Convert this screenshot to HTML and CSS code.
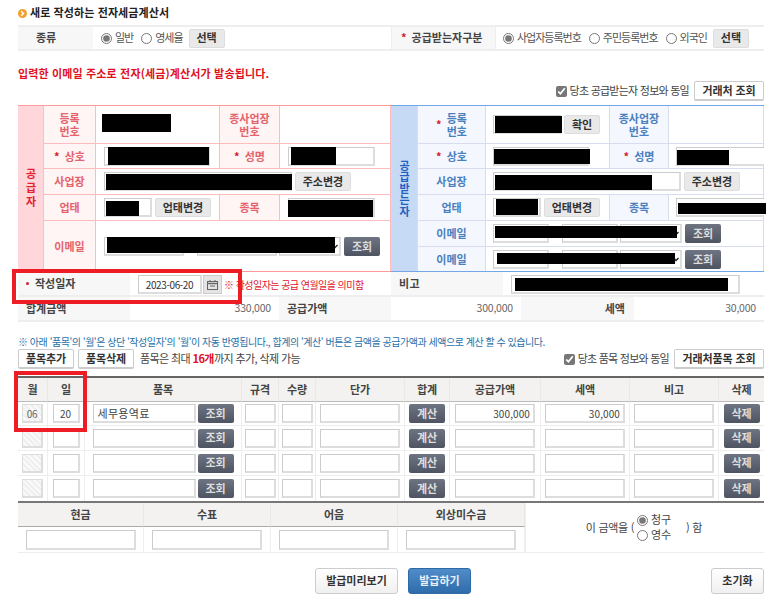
FILE: index.html
```html
<!DOCTYPE html>
<html lang="ko">
<head>
<meta charset="utf-8">
<title>전자세금계산서</title>
<link rel="stylesheet" href="styles.css">
</head>
<body>
<main class="page">
  <h1 class="title">
    <svg class="title-icon" width="9" height="9" viewBox="0 0 9 9"><circle cx="4.5" cy="4.5" r="4.5" fill="#f0a030"/><path d="M3.2 2.3 5.5 4.5 3.2 6.7" fill="none" stroke="#fff" stroke-width="1.4"/></svg>
    새로 작성하는 전자세금계산서
  </h1>

  <section class="kind-bar">
    <div class="kind-label k1">종류</div>
    <div class="kind-val kv1">
      <label class="opt"><input type="radio" name="a" checked>일반</label>
      <label class="opt"><input type="radio" name="a">영세율</label>
      <button class="btn b-near">선택</button>
    </div>
    <div class="kind-label k2"><span class="star">*</span>공급받는자구분</div>
    <div class="kind-val kv2">
      <label class="opt"><input type="radio" name="b" checked>사업자등록번호</label>
      <label class="opt"><input type="radio" name="b">주민등록번호</label>
      <label class="opt"><input type="radio" name="b">외국인</label>
      <button class="btn b-near">선택</button>
    </div>
  </section>

  <p class="notice">입력한 이메일 주소로 전자(세금)계산서가 발송됩니다.</p>

  <div class="same-row">
    <label class="check"><input type="checkbox" checked>당초 공급받는자 정보와 동일</label>
    <button class="btn-w b-lookup">거래처 조회</button>
  </div>

  <section class="panels">
    <div class="panel sup">
      <div class="side">공급자</div>
      <div class="lb">등록<br>번호</div>
      <div class="val"></div>
      <div class="lb">종사업장<br>번호</div>
      <div class="val"></div>

      <div class="lb"><span class="star">*</span>상호</div>
      <div class="val"><input class="in w106"></div>
      <div class="lb"><span class="star">*</span>성명</div>
      <div class="val"><input class="in w87"></div>

      <div class="lb">사업장</div>
      <div class="val span3"><input class="in w188"><button class="btn b-addr">주소변경</button></div>

      <div class="lb">업태</div>
      <div class="val"><input class="in w48"><button class="btn b-addr">업태변경</button></div>
      <div class="lb">종목</div>
      <div class="val"><input class="in w87"></div>

      <div class="lb">이메일</div>
      <div class="val span3 email-l">
        <input class="in w80"><input class="in w80 gap13"><select class="in sel"></select><button class="btn-d">조회</button>
      </div>
    </div>

    <div class="panel rec">
      <div class="side">공급받는자</div>
      <div class="lb"><span class="star">*</span><span>등록<br>번호</span></div>
      <div class="val"><input class="in w68"><button class="btn">확인</button></div>
      <div class="lb">종사업장<br>번호</div>
      <div class="val"></div>

      <div class="lb"><span class="star">*</span>상호</div>
      <div class="val"><input class="in w96"></div>
      <div class="lb"><span class="star">*</span>성명</div>
      <div class="val"><input class="in w100"></div>

      <div class="lb">사업장</div>
      <div class="val span3"><input class="in w188"><button class="btn b-addr">주소변경</button></div>

      <div class="lb">업태</div>
      <div class="val"><input class="in w48"><button class="btn b-addr">업태변경</button></div>
      <div class="lb">종목</div>
      <div class="val"><input class="in w100"></div>

      <div class="lb">이메일</div>
      <div class="val span3 email-r">
        <input class="in w56"><input class="in w56 gap13"><select class="in sel"></select><button class="btn-d">조회</button>
      </div>

      <div class="lb">이메일</div>
      <div class="val span3 email-r">
        <input class="in w56"><input class="in w56 gap13"><select class="in sel"></select><button class="btn-d">조회</button>
      </div>
    </div>
  </section>

  <section class="date-row">
    <div class="sum-lb date-lb"><i class="dot"></i>작성일자</div>
    <div class="date-val">
      <input class="in date-in" value="2023-06-20">
      <button class="cal" aria-label="달력">
        <svg width="11" height="10" viewBox="0 0 11 10"><rect x=".5" y="1.5" width="10" height="8" fill="none" stroke="#666"/><path d="M.5 3.5h10" stroke="#666" stroke-width="1.4"/><path d="M3 0v2M8 0v2M3 6h5" stroke="#666"/></svg>
      </button>
      <span class="date-note">※ 작성일자는 공급 연월일을 의미함</span>
    </div>
    <div class="sum-lb bigo-lb">비고</div>
    <div class="date-val"><input class="in bigo-in"></div>
  </section>

  <section class="sum-row">
    <div class="sum-lb wide-lb">합계금액</div>
    <div class="sum-val">330,000</div>
    <div class="sum-lb wide-lb">공급가액</div>
    <div class="sum-val">300,000</div>
    <div class="sum-lb end-lb">세액</div>
    <div class="sum-val">30,000</div>
  </section>

  <p class="info">※ 아래 '품목'의 '월'은 상단 '작성일자'의 '월'이 자동 반영됩니다., 합계의 '계산' 버튼은 금액을 공급가액과 세액으로 계산 할 수 있습니다.</p>

  <div class="toolbar">
    <button class="btn-w b-item">품목추가</button>
    <button class="btn-w b-item">품목삭제</button>
    <span class="limit">품목은 최대 <b>16개</b>까지 추가, 삭제 가능</span>
    <label class="check tool-check"><input type="checkbox" checked>당초 품목 정보와 동일</label>
    <button class="btn-w b-lookup2">거래처품목 조회</button>
  </div>

  <section class="items">
    <div class="th">월</div><div class="th">일</div><div class="th">품목</div><div class="th">규격</div><div class="th">수량</div><div class="th">단가</div><div class="th">합계</div><div class="th">공급가액</div><div class="th">세액</div><div class="th">비고</div><div class="th">삭제</div>

    <div class="td"><input class="in hatch small" value="06"></div><div class="td"><input class="in fill-d c" value="20"></div><div class="td"><input class="in name" value="세무용역료"><button class="btn-d">조회</button></div><div class="td"><input class="in fill-s"></div><div class="td"><input class="in fill-s"></div><div class="td"><input class="in fill-p"></div><div class="td"><button class="btn-d">계산</button></div><div class="td"><input class="in fill-m r" value="300,000"></div><div class="td"><input class="in fill-m r" value="30,000"></div><div class="td"><input class="in fill-m"></div><div class="td"><button class="btn-d">삭제</button></div>

    <div class="td"><input class="in hatch"></div><div class="td"><input class="in fill-d"></div><div class="td"><input class="in name"><button class="btn-d">조회</button></div><div class="td"><input class="in fill-s"></div><div class="td"><input class="in fill-s"></div><div class="td"><input class="in fill-p"></div><div class="td"><button class="btn-d">계산</button></div><div class="td"><input class="in fill-m"></div><div class="td"><input class="in fill-m"></div><div class="td"><input class="in fill-m"></div><div class="td"><button class="btn-d">삭제</button></div>

    <div class="td"><input class="in hatch"></div><div class="td"><input class="in fill-d"></div><div class="td"><input class="in name"><button class="btn-d">조회</button></div><div class="td"><input class="in fill-s"></div><div class="td"><input class="in fill-s"></div><div class="td"><input class="in fill-p"></div><div class="td"><button class="btn-d">계산</button></div><div class="td"><input class="in fill-m"></div><div class="td"><input class="in fill-m"></div><div class="td"><input class="in fill-m"></div><div class="td"><button class="btn-d">삭제</button></div>

    <div class="td"><input class="in hatch"></div><div class="td"><input class="in fill-d"></div><div class="td"><input class="in name"><button class="btn-d">조회</button></div><div class="td"><input class="in fill-s"></div><div class="td"><input class="in fill-s"></div><div class="td"><input class="in fill-p"></div><div class="td"><button class="btn-d">계산</button></div><div class="td"><input class="in fill-m"></div><div class="td"><input class="in fill-m"></div><div class="td"><input class="in fill-m"></div><div class="td"><button class="btn-d">삭제</button></div>
  </section>

  <section class="pay">
    <div class="th pay-th">현금</div><div class="th pay-th">수표</div><div class="th pay-th">어음</div><div class="th pay-th">외상미수금</div>
    <div class="pay-claim">
      <span>이 금액을 (</span>
      <span class="claim-opts">
        <label class="opt"><input type="radio" name="c" checked>청구</label>
        <label class="opt"><input type="radio" name="c">영수</label>
      </span>
      <span>) 함</span>
    </div>
    <div class="pay-td"><input class="in fill-pay"></div><div class="pay-td"><input class="in fill-pay"></div><div class="pay-td"><input class="in fill-pay"></div><div class="pay-td"><input class="in fill-pay"></div>
  </section>

  <div class="actions">
    <button class="act act-prev">발급미리보기</button>
    <button class="act act-go">발급하기</button>
    <button class="act act-reset">초기화</button>
  </div>
</main>

<div class="redact r1"></div><div class="redact r2"></div><div class="redact r3"></div><div class="redact r4"></div>
<div class="redact r5"></div><div class="redact r6"></div><div class="redact r7"></div><div class="redact r8"></div>
<div class="redact r9"></div><div class="redact r10"></div><div class="redact r11"></div><div class="redact r12"></div>
<div class="redact r13"></div><div class="redact r14"></div><div class="redact r15"></div><div class="redact r16"></div>
<div class="mark m1"></div><div class="mark m2"></div>
</body>
</html>
```
FILE: styles.css
```css
* { box-sizing: border-box; }
html, body { margin: 0; padding: 0; }
body {
  position: relative;
  width: 773px;
  height: 601px;
  overflow: hidden;
  background: #fff;
  color: #333;
  font: 11px/1.2 "Noto Sans CJK KR", "Noto Sans", sans-serif;
}
.page { width: 746px; margin-left: 18px; }
p { margin: 0; }
input, select, button { font: inherit; margin: 0; }
input[type=radio], input[type=checkbox] {
  width: 11px; height: 11px; margin: 0 3px 0 0; accent-color: #777; flex: none;
}

.title {
  height: 25px; margin: 0; display: flex; align-items: center; gap: 3px;
  font-size: 11px; font-weight: 700; color: #222; padding-top: 1px; letter-spacing: .1px;
}

.kind-bar {
  height: 26px; display: flex;
  border-top: 2px solid #eee; border-bottom: 2px solid #eee;
}
.kind-label {
  background: #f7f7f7; display: flex; align-items: center; font-weight: 700; color: #444;
}
.k1 { width: 75px; padding-left: 18px; }
.k2 { width: 105px; padding-left: 9px; border-left: 1px solid #eee; border-right: 1px solid #eee; white-space: nowrap; }
.kind-val { display: flex; align-items: center; color: #555; white-space: nowrap; }
.kv1 { width: 298px; padding-left: 8px; }
.kv2 { flex: 1; padding-left: 7px; }
.opt { display: inline-flex; align-items: center; margin-right: 8px; letter-spacing: -1px; white-space: nowrap; }
.b-near { margin-left: -2px; }
.star { color: #d0202a; font-weight: 700; margin-right: 5px; }

.btn {
  width: 36px; height: 19px; padding: 0; flex: none;
  border: 1px solid #ddd; border-radius: 2px; background: #e9e9e9;
  font-weight: 700; color: #333; font-size: 11px;
}
.btn-w {
  height: 20px; padding: 0; background: #fff; border: 1px solid #ccc; border-bottom-width: 2px;
  border-radius: 2px; color: #333; font-weight: 700; letter-spacing: -.1px;
}
.btn-d {
  width: 36px; height: 19px; padding: 0; flex: none;
  border: 0; border-radius: 2px;
  background: linear-gradient(#6e7482, #4e5461);
  color: #ddd; font-weight: 700; font-size: 11px;
}

.notice {
  height: 30px; padding-top: 16px; color: #e0101f; font-weight: 700; line-height: 13px; letter-spacing: .15px;
}

.same-row { height: 24px; display: flex; justify-content: flex-end; align-items: flex-start; }
.check { display: inline-flex; align-items: center; color: #444; height: 20px; letter-spacing: -.75px; white-space: nowrap; }
.b-lookup { width: 70px; margin-left: 5px; }

.panels { display: grid; grid-template-columns: 373px 373px; height: 167px; }
.panel { display: grid; overflow: hidden; }
.sup {
  grid-template-columns: 26px 52px 124px 60px 1fr;
  grid-template-rows: 38px 25px 26px 26px 51px;
  border-top: 1px solid #ff9a9a; border-bottom: 1px solid #ff9a9a;
  --line: #ffbcbc; --lbg: #fff5f5; --lcol: #e5636b;
}
.rec {
  grid-template-columns: 27px 68px 124px 59px 1fr;
  grid-template-rows: 38px 25px 26px 26px 26px 25px;
  border-top: 1px solid #74a7e8; border-bottom: 1px solid #74a7e8;
  --line: #d8dcef; --lbg: #f5f7fe; --lcol: #4a80bd;
}
.side {
  grid-row: 1 / -1; display: flex; align-items: center; justify-content: center;
  writing-mode: vertical-rl; text-orientation: upright;
  font-weight: 700; line-height: 1;
}
.sup .side { background: #ffd6da; color: #e8202c; border-right: 1px solid var(--line); letter-spacing: 3px; }
.rec .side { background: #c6daf6; color: #1d62c0; border-right: 1px solid var(--line); letter-spacing: .5px; }
.lb {
  background: var(--lbg); color: var(--lcol); font-weight: 700;
  border-right: 1px solid var(--line); border-bottom: 1px solid var(--line);
  display: flex; align-items: center; justify-content: center; text-align: center;
  line-height: 13px;
}
.val {
  border-bottom: 1px solid var(--line); border-right: 1px solid var(--line);
  display: flex; align-items: center; padding-left: 8px; gap: 3px; min-width: 0;
}
.rec .val { padding-left: 7px; }
.sup > :nth-last-child(-n+2), .rec > :nth-last-child(-n+2) { border-bottom: 0; }
.span3 { grid-column: span 3; }
.in {
  height: 19px; padding: 0 4px; background: #fff; border: 1px solid #ccc;
  border-right: 2px solid #ddd; border-bottom: 2px solid #ddd; border-radius: 0;
  outline: 0; color: #444; font-size: 11px; min-width: 0; flex: none;
}
.w48 { width: 48px; } .w56 { width: 56px; } .w68 { width: 68px; } .w80 { width: 80px; }
.w87 { width: 87px; } .w96 { width: 96px; } .w100 { width: 100px; } .w106 { width: 106px; } .w188 { width: 188px; }
.sel {
  width: 62px; padding: 0; appearance: none;
  background: #fff url("data:image/svg+xml,%3Csvg xmlns='http://www.w3.org/2000/svg' width='6' height='5'%3E%3Cpath d='M.5 1 3 3.5 5.5 1' fill='none' stroke='%23222' stroke-width='1.4'/%3E%3C/svg%3E") no-repeat right 1px center;
}
.email-l, .email-r { gap: 2px; }
.email-l .btn-d, .email-r .btn-d { margin-left: 1px; }
.gap13 { margin-left: 11px; }
.b-addr { width: 56px; }

.date-row {
  display: grid; grid-template-columns: 112px 261px 112px 1fr; height: 25px;
  border-bottom: 2px solid #eee;
}
.sum-row {
  display: grid; grid-template-columns: 112px 149px 112px 130px 113px 130px; height: 25px;
  border-bottom: 2px solid #eee;
}
.sum-lb {
  background: #f7f7f7; display: flex; align-items: center; font-weight: 700; color: #444;
}
.date-lb { padding-left: 8px; }
.dot { width: 3px; height: 3px; background: #d0202a; border-radius: 50%; margin-right: 6px; }
.bigo-lb { padding-left: 8px; letter-spacing: .5px; }
.wide-lb { padding-left: 8px; }
.end-lb { justify-content: flex-end; padding-right: 9px; }
.date-val { display: flex; align-items: center; padding: 2px 0 0 8px; color: #e0202c; }
.date-in { width: 64px; text-align: center; padding: 0; color: #333; font-size: 10px; letter-spacing: -.4px; }
.cal {
  width: 19px; height: 19px; margin-left: 1px; padding: 0; flex: none;
  background: #e4e4e4; border: 1px solid #ccc; display: flex; align-items: center; justify-content: center;
}
.date-note { margin-left: 2px; white-space: nowrap; letter-spacing: -.55px; font-size: 10px; }
.bigo-in { width: 229px; }
.sum-val { display: flex; align-items: center; justify-content: flex-end; padding-right: 8px; color: #666; letter-spacing: -.2px; font-size: 10.5px; }

.info { height: 15px; margin-top: 12px; line-height: 13px; padding-top: 1px; color: #1f70a8; font-size: 10px; letter-spacing: -.47px; white-space: nowrap; }

.toolbar { height: 20px; display: flex; align-items: center; }
.b-item { width: 56px; margin-right: 4px; }
.limit { margin-left: 2px; color: #444; letter-spacing: -.6px; }
.limit b { color: #e0101f; }
.tool-check { margin-left: auto; }
.b-lookup2 { width: 90px; margin-left: 5px; }

.items {
  margin-top: 7px;
  display: grid;
  grid-template-columns: 30px 37px 157px 37px 37px 89px 45px 91px 89px 89px 45px;
  grid-template-rows: 24px 24px 25px 25px 25px;
  border-top: 2px solid #666; border-bottom: 2px solid #777;
}
.th {
  background: #f3f2f0; border-bottom: 1px solid #bbb; border-right: 1px solid #e9e8e6;
  display: flex; align-items: center; justify-content: center; font-weight: 700; color: #444;
}
.td {
  border-bottom: 1px solid #eee; border-right: 1px solid #eee;
  display: flex; align-items: center; justify-content: center; gap: 2px;
}
.items > :nth-child(11n) { border-right: 0; }
.items > :nth-last-child(-n+11) { border-bottom: 0; }
.hatch {
  width: 21px; padding: 0; text-align: center; border-color: #ddd;
  background: repeating-linear-gradient(45deg, #efefef 0 2px, #fafafa 2px 4px);
}
.small { font-size: 10px; color: #666; letter-spacing: -.3px; }
.fill-d { width: 27px; }
.c { text-align: center; padding: 0; font-size: 10px; }
.name { width: 103px; letter-spacing: .3px; }
.fill-s { width: 31px; }
.fill-p { width: 80px; }
.fill-m { width: 80px; }
.r { text-align: right; padding-right: 3px; font-size: 10px; letter-spacing: .1px; }

.pay {
  display: grid;
  grid-template-columns: 126px 127px 127px 127px 1fr;
  grid-template-rows: 24px 25px;
  border-bottom: 1px solid #eee;
}
.pay-th { border-bottom: 1px solid #aaa; }
.pay-td {
  display: flex; align-items: center; justify-content: center; border-right: 1px solid #eee;
}
.fill-pay { width: 110px; height: 20px; }
.pay-claim {
  grid-column: 5; grid-row: 1 / 3; display: flex; align-items: center; justify-content: center;
  border-left: 1px solid #eee; color: #444; gap: 3px; padding-right: 2px; letter-spacing: -.3px;
}
.claim-opts { display: flex; flex-direction: column; width: 46px; }
.claim-opts .opt { margin: 0; height: 15px; letter-spacing: -.2px; }

.actions { display: flex; margin-top: 15px; padding-left: 297px; gap: 10px; }
.act {
  height: 26px; padding: 0; border-radius: 3px; font-weight: 700; font-size: 11px;
  border: 1px solid #ccc; background: linear-gradient(#fff, #f0f0f0); color: #333;
}
.act-prev { width: 83px; }
.act-go { width: 63px; border-color: #2f6aa8; background: linear-gradient(#4f8cc8, #2f6cab); color: #e8f0fa; }
.act-reset { width: 53px; margin-left: auto; }

.redact { position: absolute; background: #000; }
.r1 { left: 102px; top: 114px; width: 69px; height: 18px; }
.r2 { left: 108px; top: 147px; width: 101px; height: 18px; }
.r3 { left: 291px; top: 147px; width: 45px; height: 18px; }
.r4 { left: 106px; top: 174px; width: 186px; height: 16px; }
.r5 { left: 106px; top: 201px; width: 33px; height: 15px; }
.r6 { left: 288px; top: 200px; width: 85px; height: 17px; }
.r7 { left: 107px; top: 237px; width: 228px; height: 16px; }
.r8 { left: 495px; top: 116px; width: 67px; height: 17px; }
.r9 { left: 494px; top: 149px; width: 96px; height: 15px; }
.r10 { left: 677px; top: 150px; width: 52px; height: 15px; }
.r11 { left: 495px; top: 175px; width: 157px; height: 15px; }
.r12 { left: 496px; top: 199px; width: 42px; height: 16px; }
.r13 { left: 678px; top: 203px; width: 88px; height: 11px; }
.r14 { left: 495px; top: 226px; width: 182px; height: 12px; }
.r15 { left: 497px; top: 253px; width: 178px; height: 11px; }
.r16 { left: 515px; top: 278px; width: 213px; height: 13px; }
.mark { position: absolute; border: 4px solid #ee1c25; }
.m1 { left: 12px; top: 269px; width: 230px; height: 35px; }
.m2 { left: 14px; top: 371px; width: 73px; height: 61px; }
```
